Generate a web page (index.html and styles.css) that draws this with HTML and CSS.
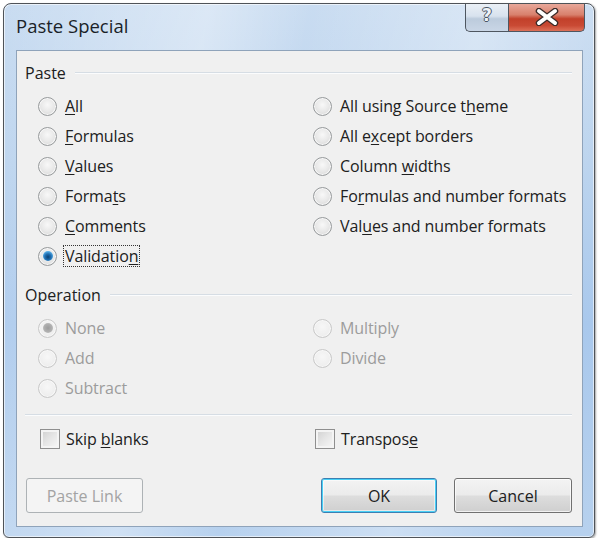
FILE: index.html
```html
<!DOCTYPE html>
<html>
<head>
<meta charset="utf-8">
<title>Paste Special</title>
<link rel="stylesheet" href="styles.css">
</head>
<body>
<div class="window">
  <div class="titlebar">
    <span class="title">Paste Special</span>
    <div class="caption">
      <div class="cbtn help"><span class="qmark">?</span></div>
      <div class="cbtn close">
        <svg width="28" height="18" viewBox="0 0 28 18">
          <path d="M6 3 L22 15 M22 3 L6 15" stroke="#3a2a28" stroke-width="6.5" stroke-linecap="round"/>
          <path d="M6 3 L22 15 M22 3 L6 15" stroke="#ffffff" stroke-width="4" stroke-linecap="round"/>
        </svg>
      </div>
    </div>
  </div>
  <div class="client">
    <div class="group-head"><span class="head-text">Paste</span><div class="rule"></div></div>
    <div class="options paste-opts">
      <div class="opt"><span class="radio"></span><span class="lbl"><u>A</u>ll</span></div>
      <div class="opt"><span class="radio"></span><span class="lbl"><u>F</u>ormulas</span></div>
      <div class="opt"><span class="radio"></span><span class="lbl"><u>V</u>alues</span></div>
      <div class="opt"><span class="radio"></span><span class="lbl">Forma<u>t</u>s</span></div>
      <div class="opt"><span class="radio"></span><span class="lbl"><u>C</u>omments</span></div>
      <div class="opt"><span class="radio checked"></span><span class="lbl focus">Validatio<u>n</u></span></div>
      <div class="opt"><span class="radio"></span><span class="lbl">All using Source t<u>h</u>eme</span></div>
      <div class="opt"><span class="radio"></span><span class="lbl">All e<u>x</u>cept borders</span></div>
      <div class="opt"><span class="radio"></span><span class="lbl">Column <u>w</u>idths</span></div>
      <div class="opt"><span class="radio"></span><span class="lbl">Fo<u>r</u>mulas and number formats</span></div>
      <div class="opt"><span class="radio"></span><span class="lbl">Val<u>u</u>es and number formats</span></div>
    </div>
    <div class="group-head op-head"><span class="head-text">Operation</span><div class="rule"></div></div>
    <div class="options op-opts disabled">
      <div class="opt"><span class="radio checked"></span><span class="lbl">None</span></div>
      <div class="opt"><span class="radio"></span><span class="lbl">Add</span></div>
      <div class="opt"><span class="radio"></span><span class="lbl">Subtract</span></div>
      <div class="opt"><span class="radio"></span><span class="lbl">Multiply</span></div>
      <div class="opt"><span class="radio"></span><span class="lbl">Divide</span></div>
    </div>
    <div class="rule full"></div>
    <div class="options checks">
      <div class="opt"><span class="checkbox"></span><span class="lbl">Skip <u>b</u>lanks</span></div>
      <div class="opt"><span class="checkbox"></span><span class="lbl">Transpos<u>e</u></span></div>
    </div>
    <div class="buttons">
      <div class="btn disabled-btn">Paste Link</div>
      <div class="spacer"></div>
      <div class="btn default-btn">OK</div>
      <div class="btn">Cancel</div>
    </div>
  </div>
</div>
</body>
</html>
```
FILE: styles.css
```css
html, body {
  margin: 0;
  padding: 0;
  background: #ffffff;
}
body {
  font-family: "Open Sans", "Noto Sans", "Liberation Sans", sans-serif;
  font-size: 16px;
  color: #202020;
}
.window {
  margin: 3px 0 0 3px;
  width: 567px;
  height: 523px;
  border: 1px solid #4f5358;
  border-radius: 8px 8px 6px 6px;
  background:
    linear-gradient(100deg, rgba(255,255,255,0.0) 0%, rgba(255,255,255,0.35) 30%, rgba(255,255,255,0.0) 45%, rgba(255,255,255,0.3) 70%, rgba(255,255,255,0.0) 90%),
    linear-gradient(180deg, #c9dcf1 0%, #bcd4ee 30%, #a9c8ec 60%, #b7d1ee 100%);
  box-shadow: inset 0 0 0 1px rgba(255,255,255,0.6), 1px 1px 2px rgba(0,0,0,0.35);
  padding: 0 11px 10px 12px;
  box-sizing: content-box;
  display: flex;
  flex-direction: column;
}
.titlebar {
  height: 46px;
  flex: none;
  display: flex;
  justify-content: space-between;
  align-items: flex-start;
  margin-right: -2px;
}
.title {
  margin-top: 10px;
  line-height: 24px;
  font-size: 18.5px;
  color: #1a1f28;
}
.caption {
  display: flex;
}
.cbtn {
  height: 28px;
  border: 1px solid #4e5660;
  border-top: none;
  display: flex;
  align-items: center;
  justify-content: center;
  box-sizing: border-box;
}
.help {
  width: 43px;
  border-radius: 0 0 0 5px;
  border-right: none;
  background: linear-gradient(180deg, #eaf0f6 0%, #d8e2ee 45%, #bccbdc 55%, #c9d6e6 100%);
}
.qmark {
  font-family: "DejaVu Sans", sans-serif;
  font-weight: bold;
  font-size: 17px;
  line-height: 17px;
  color: #eef2f6;
  text-shadow: -1px 0 #4a5563, 1px 0 #4a5563, 0 -1px #4a5563, 0 1px #4a5563;
  margin-top: -4px;
}
.close {
  width: 77px;
  border-radius: 0 0 5px 0;
  background: linear-gradient(180deg, #e8a89a 0%, #d8806c 40%, #c2402a 55%, #c94a34 80%, #dc7058 100%);
}
.close svg { margin-top: -2px; }
.client {
  flex: 1;
  background: #f0f0f0;
  border: 1px solid #8fa3ba;
  box-sizing: border-box;
  padding: 12px 10px 0 0;
  display: flex;
  flex-direction: column;
}
.group-head {
  display: flex;
  align-items: center;
  height: 20px;
  padding-left: 8px;
}
.head-text {
  line-height: 20px;
  margin-right: 9px;
}
.rule {
  flex: 1;
  height: 0;
  border-top: 1px solid #d6dde4;
  border-bottom: 1px solid #fbfcfd;
}
.rule.full {
  flex: none;
  margin: 11px 0 0 8px;
}
.options {
  display: grid;
  grid-template-columns: 275px 1fr;
  grid-auto-flow: column;
  grid-auto-rows: 30px;
  padding-left: 22px;
}
.paste-opts {
  grid-template-rows: repeat(6, 30px);
  margin-top: 8px;
}
.op-head { margin-top: 14px; }
.op-opts {
  grid-template-rows: repeat(3, 30px);
  margin-top: 8px;
}
.opt {
  display: flex;
  align-items: center;
  white-space: nowrap;
}
.lbl {
  line-height: 20px;
  border: 1px dotted transparent;
  padding: 0 1px;
  margin-left: 6px;
  letter-spacing: -0.1px;
}
.lbl u {
  text-underline-offset: 2px;
}
.lbl.focus {
  border-color: #333;
}
.radio {
  width: 19px;
  height: 19px;
  border-radius: 50%;
  box-sizing: border-box;
  border: 1px solid #979a9c;
  background: radial-gradient(circle at 50% 40%, #f8f8f8 0%, #e8e8e8 50%, #d2d2d2 100%);
  box-shadow: inset 0 0 0 1px #f8f8f8;
  position: relative;
  flex: none;
  margin-left: -1px;
}
.radio.checked::after {
  content: "";
  position: absolute;
  left: 3.5px;
  top: 3.5px;
  width: 10px;
  height: 10px;
  border-radius: 50%;
  background: radial-gradient(circle at 50% 60%, #0b3f70 0%, #1f6fb3 40%, #5fb4ea 75%, #2a6aa0 100%);
}
.disabled .lbl { color: #9c9c9c; }
.disabled .radio {
  border-color: #c8c8c8;
  background: radial-gradient(circle at 50% 40%, #f7f7f7 0%, #efefef 60%, #e2e2e2 100%);
}
.disabled .radio.checked::after {
  background: radial-gradient(circle at 50% 50%, #9c9c9c 0%, #b0b0b0 55%, #d0d0d0 100%);
}
.checks {
  grid-template-rows: 24px;
  grid-auto-rows: 24px;
  margin-top: 11px;
  padding-left: 23px;
}
.checks .lbl { margin-left: 4px; }
.checkbox {
  width: 20px;
  height: 20px;
  box-sizing: border-box;
  border: 1px solid #8f8f8f;
  background: linear-gradient(135deg, #cfcfcf 0%, #e6e6e6 50%, #f8f8f8 100%);
  box-shadow: inset 0 0 0 2px #f4f4f4;
  flex: none;
}
.buttons {
  display: flex;
  margin-top: 27px;
  padding-left: 9px;
  gap: 17px;
}
.spacer { flex: 1; }
.btn {
  width: 118px;
  height: 35px;
  box-sizing: border-box;
  border: 1px solid #707070;
  border-radius: 3px;
  background: linear-gradient(180deg, #f3f3f3 0%, #ebebeb 48%, #dddddd 52%, #cfcfcf 100%);
  box-shadow: inset 0 0 0 1px rgba(255,255,255,0.7);
  display: flex;
  align-items: center;
  justify-content: center;
  font-size: 16px;
}
.default-btn {
  width: 116px;
  border-color: #3c7fb1;
  box-shadow: inset 0 0 0 1px #48d0f6, inset 0 0 0 2px rgba(255,255,255,0.5);
}
.disabled-btn {
  width: 117px;
  border-color: #adb2b5;
  background: #f4f4f4;
  color: #a3a3a3;
  box-shadow: none;
}
```
